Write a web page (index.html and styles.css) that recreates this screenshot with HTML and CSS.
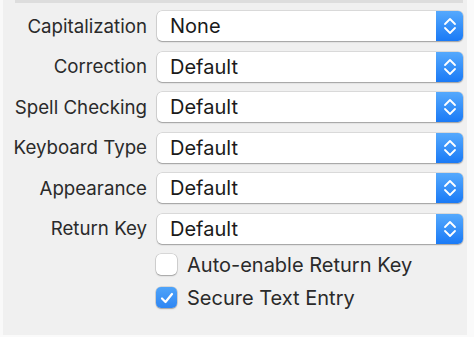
FILE: index.html
```html
<!DOCTYPE html>
<html lang="en">
<head>
    <meta charset="UTF-8">
    <title>Text Input Traits</title>
    <link rel="stylesheet" href="styles.css">
</head>
<body>

<div class="panel">
    <div class="topbar"></div>

    <div class="form">
        <div class="row">
            <span class="label">Capitalization</span>
            <div class="popup"><span class="value">None</span><span class="stepper"><svg width="14" height="20" viewBox="0 0 14 20"><path d="M2 8 L7 3 L12 8 M2 12 L7 17 L12 12" fill="none" stroke="#fff" stroke-width="1.8" stroke-linecap="round" stroke-linejoin="round"/></svg></span></div>
        </div>
        <div class="row">
            <span class="label">Correction</span>
            <div class="popup"><span class="value">Default</span><span class="stepper"><svg width="14" height="20" viewBox="0 0 14 20"><path d="M2 8 L7 3 L12 8 M2 12 L7 17 L12 12" fill="none" stroke="#fff" stroke-width="1.8" stroke-linecap="round" stroke-linejoin="round"/></svg></span></div>
        </div>
        <div class="row">
            <span class="label">Spell Checking</span>
            <div class="popup"><span class="value">Default</span><span class="stepper"><svg width="14" height="20" viewBox="0 0 14 20"><path d="M2 8 L7 3 L12 8 M2 12 L7 17 L12 12" fill="none" stroke="#fff" stroke-width="1.8" stroke-linecap="round" stroke-linejoin="round"/></svg></span></div>
        </div>
        <div class="row">
            <span class="label">Keyboard Type</span>
            <div class="popup"><span class="value">Default</span><span class="stepper"><svg width="14" height="20" viewBox="0 0 14 20"><path d="M2 8 L7 3 L12 8 M2 12 L7 17 L12 12" fill="none" stroke="#fff" stroke-width="1.8" stroke-linecap="round" stroke-linejoin="round"/></svg></span></div>
        </div>
        <div class="row">
            <span class="label">Appearance</span>
            <div class="popup"><span class="value">Default</span><span class="stepper"><svg width="14" height="20" viewBox="0 0 14 20"><path d="M2 8 L7 3 L12 8 M2 12 L7 17 L12 12" fill="none" stroke="#fff" stroke-width="1.8" stroke-linecap="round" stroke-linejoin="round"/></svg></span></div>
        </div>
        <div class="row">
            <span class="label">Return Key</span>
            <div class="popup"><span class="value">Default</span><span class="stepper"><svg width="14" height="20" viewBox="0 0 14 20"><path d="M2 8 L7 3 L12 8 M2 12 L7 17 L12 12" fill="none" stroke="#fff" stroke-width="1.8" stroke-linecap="round" stroke-linejoin="round"/></svg></span></div>
        </div>

        <div class="checks">
            <label class="check">
                <span class="box"></span>
                <span>Auto-enable Return Key</span>
            </label>
            <label class="check">
                <span class="box checked"><svg width="16" height="16" viewBox="0 0 16 16"><path d="M3 8.5 L6.5 12 L13 4" fill="none" stroke="#fff" stroke-width="2.2" stroke-linecap="round" stroke-linejoin="round"/></svg></span>
                <span>Secure Text Entry</span>
            </label>
        </div>
    </div>
</div>

</body>
</html>
```

FILE: styles.css
```css
body {
    margin: 0;
    background-color: #fafafa;
    font-family: Inter, "Liberation Sans", Arial, sans-serif;
    color: #2a2a2a;
}

.panel {
    width: 467px;
    height: 335px;
    background-color: #f0f0f0;
    border-left: 3px solid #f9f9f9;
    box-sizing: border-box;
}

.topbar {
    height: 3px;
    margin: 0 4px 0 12px;
    background-color: #dddddd;
}

.form {
    padding-top: 8px;
}

.row {
    display: flex;
    align-items: center;
    height: 30px;
    margin-bottom: 10.5px;
}

.label {
    width: 144px;
    text-align: right;
    font-size: 18.7px;
    padding-right: 10px;
    white-space: nowrap;
}

.popup {
    display: flex;
    align-items: stretch;
    width: 306px;
    height: 30px;
    background-color: #fff;
    border-radius: 5px;
    box-shadow: 0 0 0 0.5px rgba(0, 0, 0, 0.18), 0 1px 1.5px rgba(0, 0, 0, 0.28);
    overflow: hidden;
}

.value {
    flex: 1;
    display: flex;
    align-items: center;
    padding-left: 13px;
    font-size: 20px;
    color: #1a1a1a;
}

.stepper {
    width: 27px;
    display: flex;
    align-items: center;
    justify-content: center;
    background: linear-gradient(#55a9fd, #1a7af6);
}

.checks {
    padding-left: 153px;
    margin-top: -6px;
}

.check {
    display: flex;
    align-items: center;
    gap: 10px;
    height: 33px;
    font-size: 20px;
}

.box {
    width: 21px;
    height: 21px;
    box-sizing: border-box;
    background-color: #fff;
    border-radius: 5px;
    box-shadow: 0 0 0 0.5px rgba(0, 0, 0, 0.2), 0 1px 1.5px rgba(0, 0, 0, 0.25);
    display: flex;
    align-items: center;
    justify-content: center;
}

.box.checked {
    background: linear-gradient(#4ea3f9, #2e86f3);
}
```
